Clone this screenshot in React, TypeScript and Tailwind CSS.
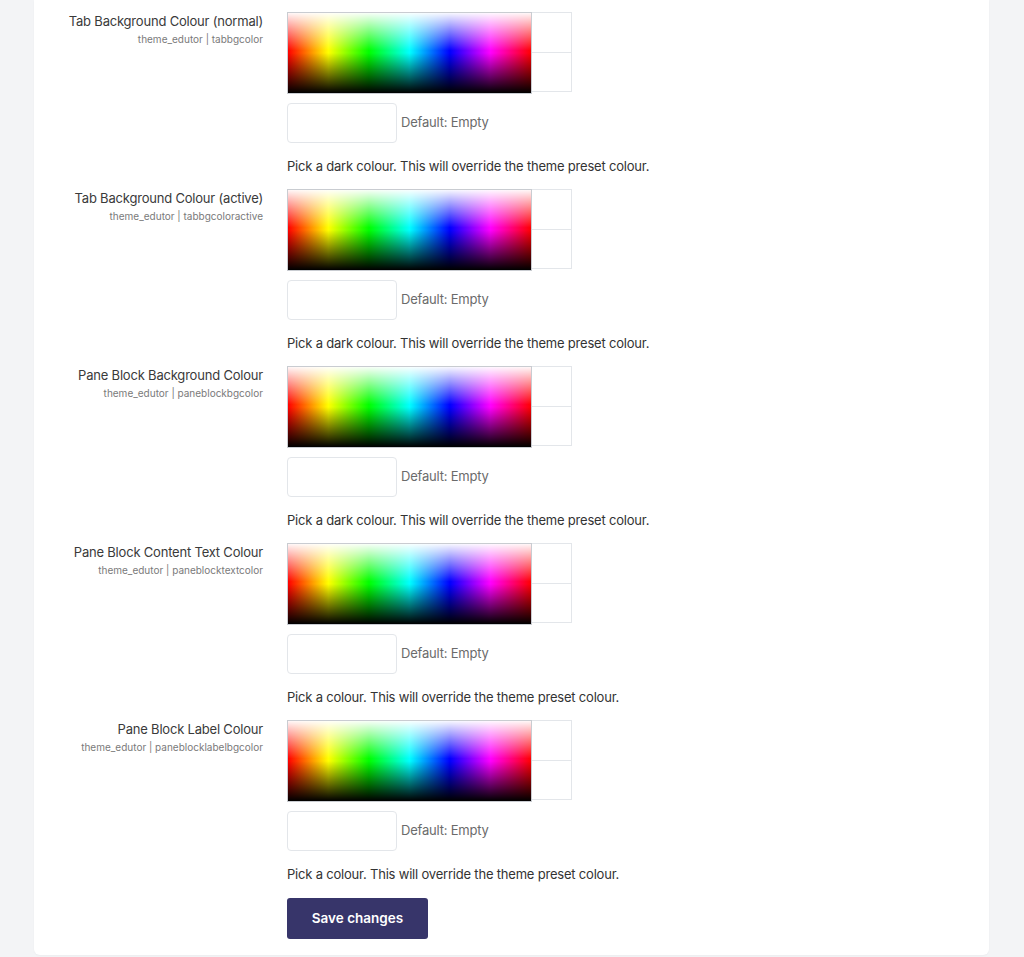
import React from "react";

type Field = { label: string; key: string; help: string };

const fields: Field[] = [
  { label: "Tab Background Colour (normal)", key: "tabbgcolor", help: "Pick a dark colour. This will override the theme preset colour." },
  { label: "Tab Background Colour (active)", key: "tabbgcoloractive", help: "Pick a dark colour. This will override the theme preset colour." },
  { label: "Pane Block Background Colour", key: "paneblockbgcolor", help: "Pick a dark colour. This will override the theme preset colour." },
  { label: "Pane Block Content Text Colour", key: "paneblocktextcolor", help: "Pick a colour. This will override the theme preset colour." },
  { label: "Pane Block Label Colour", key: "paneblocklabelbgcolor", help: "Pick a colour. This will override the theme preset colour." },
];

function Picker() {
  return (
    <div className="flex w-[285px]">
      <div className="relative h-[82px] w-[245px] border border-[#c9ccd1] bg-[linear-gradient(to_right,#ff0000_0%,#ffff00_16.6%,#00ff00_33.3%,#00ffff_50%,#0000ff_66.6%,#ff00ff_83.3%,#ff0000_100%)]">
        <div className="absolute inset-0 bg-[linear-gradient(to_bottom,rgba(255,255,255,0.97)_0%,rgba(255,255,255,0)_47%,rgba(0,0,0,0)_50%,rgba(0,0,0,1)_100%)]" />
      </div>
      <div className="flex flex-col border border-l-0 border-[#e3e6ea] h-[80px] w-[40px]">
        <div className="h-[40px] border-b border-[#e3e6ea] bg-white" />
        <div className="flex-1 bg-white" />
      </div>
    </div>
  );
}

function Row({ f }: { f: Field }) {
  return (
    <div className="flex">
      <div className="w-[229px] shrink-0 text-right">
        <div className="text-[13px] leading-[18px] tracking-[-0.2px] text-[#3a3a3a]">{f.label}</div>
        <div className="mt-[2px] text-[10px] leading-[14px] text-[#7a7a7a]">theme_edutor | {f.key}</div>
      </div>
      <div className="ml-[24px] flex flex-col">
        <Picker />
        <div className="mt-[9px] flex items-center">
          <input
            type="text"
            className="h-[40px] w-[110px] rounded-[4px] border border-[#e3e6ea] bg-white px-2 text-[13px] outline-none"
          />
          <span className="ml-[4px] text-[13px] tracking-[-0.2px] text-[#6b6b6b]">Default: Empty</span>
        </div>
        <div className="mt-[13px] text-[13px] leading-[20px] tracking-[-0.2px] text-[#333333]">{f.help}</div>
      </div>
    </div>
  );
}

export default function App() {
  return (
    <div
      className="min-h-[957px] bg-[#f3f4f6] pb-[2px]"
      style={{ fontFamily: "Inter, 'Noto Sans', sans-serif" }}
    >
      <div className="mx-[34px] w-[955px] rounded-b-[6px] bg-white pt-[12px] pb-[16px] shadow-[0_1px_2px_rgba(0,0,0,0.03)]">
        <div className="flex flex-col gap-[13px]">
          {fields.map((f) => (
            <Row key={f.key} f={f} />
          ))}
        </div>
        <div className="mt-[14px] ml-[253px]">
          <button className="h-[41px] w-[141px] rounded-[3px] bg-[#37356a] text-[13.5px] font-semibold text-white">
            Save changes
          </button>
        </div>
      </div>
    </div>
  );
}
